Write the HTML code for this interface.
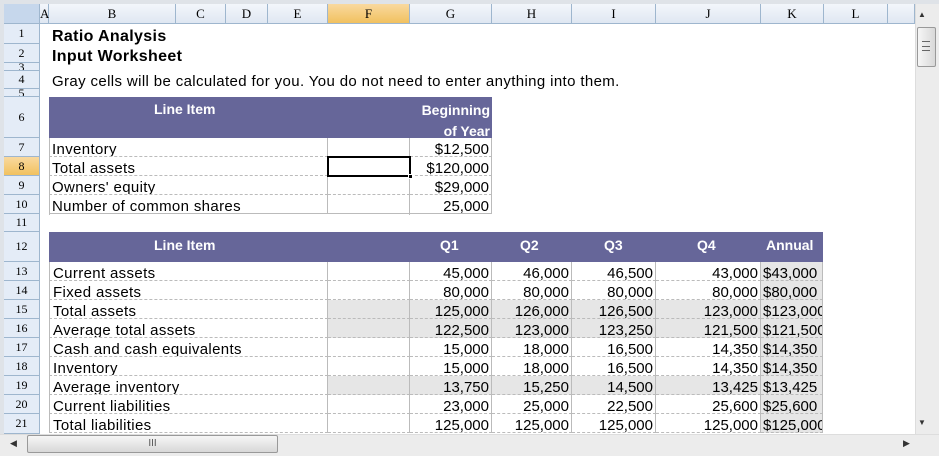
<!DOCTYPE html><html><head><style>
*{margin:0;padding:0;box-sizing:border-box}
body{width:939px;height:456px;overflow:hidden;background:#fff;position:relative;font-family:"Liberation Sans",sans-serif}
.a{position:absolute}
.ch{position:absolute;top:4px;height:20px;background:linear-gradient(#f3f6fb,#dfe7f2);border-right:1px solid #9eb6ce;border-bottom:1px solid #9eb6ce;font:13px "Liberation Serif",serif;text-align:center;line-height:19px;color:#000}
.rh{position:absolute;left:4px;width:36px;background:#e4ecf7;border-bottom:1px solid #9eb6ce;border-right:1px solid #9eb6ce;font:12px "Liberation Serif",serif;text-align:center;color:#000;overflow:hidden}
.sel{background:linear-gradient(#f9d99f,#f1c15f)!important}
.t{position:absolute;font-size:15px;color:#000;white-space:nowrap;line-height:19px}
.hdr{position:absolute;background:#666699;color:#fff;font-weight:bold;font-size:14px}
.c{position:absolute;height:19px;border-bottom:1px dashed #bbb;border-right:1px solid #bbb;font-size:15px;line-height:23px;text-align:right;padding-right:2px;overflow:hidden;white-space:nowrap}
.l{letter-spacing:0.35px}
.g{background:#e6e6e6}
</style></head><body>
<div class="a" style="left:0;top:0;width:939px;height:4px;background:#dfe3e8"></div>
<div class="a" style="left:0;top:0;width:4px;height:456px;background:#dfe3e8"></div>
<div class="ch" style="left:4px;width:36px;background:#c6d7ec"></div>
<div class="ch" style="left:40px;width:9px">A</div>
<div class="ch" style="left:49px;width:127px">B</div>
<div class="ch" style="left:176px;width:50px">C</div>
<div class="ch" style="left:226px;width:42px">D</div>
<div class="ch" style="left:268px;width:60px">E</div>
<div class="ch sel" style="left:328px;width:82px">F</div>
<div class="ch" style="left:410px;width:82px">G</div>
<div class="ch" style="left:492px;width:80px">H</div>
<div class="ch" style="left:572px;width:84px">I</div>
<div class="ch" style="left:656px;width:105px">J</div>
<div class="ch" style="left:761px;width:63px">K</div>
<div class="ch" style="left:824px;width:64px">L</div>
<div class="ch" style="left:888px;width:27px"></div>

<div class="rh" style="top:24px;height:20px;line-height:19px">1</div>
<div class="rh" style="top:44px;height:19px;line-height:18px">2</div>
<div class="rh" style="top:63px;height:8px;line-height:8px">3</div>
<div class="rh" style="top:71px;height:18px;line-height:17px">4</div>
<div class="rh" style="top:89px;height:8px;line-height:8px">5</div>
<div class="rh" style="top:97px;height:41px;line-height:40px">6</div>
<div class="rh" style="top:138px;height:19px;line-height:18px">7</div>
<div class="rh sel" style="top:157px;height:19px;line-height:18px">8</div>
<div class="rh" style="top:176px;height:19px;line-height:18px">9</div>
<div class="rh" style="top:195px;height:19px;line-height:18px">10</div>
<div class="rh" style="top:214px;height:18px;line-height:17px">11</div>
<div class="rh" style="top:232px;height:30px;line-height:29px">12</div>
<div class="rh" style="top:262px;height:19px;line-height:18px">13</div>
<div class="rh" style="top:281px;height:19px;line-height:18px">14</div>
<div class="rh" style="top:300px;height:19px;line-height:18px">15</div>
<div class="rh" style="top:319px;height:19px;line-height:18px">16</div>
<div class="rh" style="top:338px;height:19px;line-height:18px">17</div>
<div class="rh" style="top:357px;height:19px;line-height:18px">18</div>
<div class="rh" style="top:376px;height:19px;line-height:18px">19</div>
<div class="rh" style="top:395px;height:19px;line-height:18px">20</div>
<div class="rh" style="top:414px;height:20px;line-height:18px">21</div>

<div class="t l" style="left:52px;top:27px;font-weight:bold;font-size:16px">Ratio Analysis</div>
<div class="t l" style="left:52px;top:47px;font-weight:bold;font-size:16px">Input Worksheet</div>
<div class="a" style="left:52px;top:71px;height:18px;overflow:hidden;font-size:15px;line-height:22px;letter-spacing:0.37px;white-space:nowrap">Gray cells will be calculated for you. You do not need to enter anything into them.</div>

<div class="hdr" style="left:49px;top:97px;width:443px;height:41px"></div>
<div class="t" style="left:154px;top:100px;color:#fff;font-weight:bold;font-size:14px">Line Item</div>
<div class="t" style="left:410px;top:100px;width:80px;text-align:right;color:#fff;font-weight:bold;font-size:14px;line-height:21px;white-space:normal">Beginning<br>of Year</div>

<div class="c l" style="left:49px;top:138px;width:279px;text-align:left;padding-left:3px">Inventory</div>
<div class="c l" style="left:49px;top:157px;width:279px;text-align:left;padding-left:3px">Total assets</div>
<div class="c l" style="left:49px;top:176px;width:279px;text-align:left;padding-left:3px">Owners' equity</div>
<div class="c l" style="left:49px;top:195px;width:279px;text-align:left;padding-left:3px;border-bottom:1px solid #bbb">Number of common shares</div>
<div class="c" style="left:328px;top:138px;width:82px"></div>
<div class="c" style="left:328px;top:157px;width:82px"></div>
<div class="c" style="left:328px;top:176px;width:82px"></div>
<div class="c" style="left:328px;top:195px;width:82px;border-bottom:1px solid #bbb"></div>
<div class="c" style="left:410px;top:138px;width:82px">$12,500</div>
<div class="c" style="left:410px;top:157px;width:82px">$120,000</div>
<div class="c" style="left:410px;top:176px;width:82px">$29,000</div>
<div class="c" style="left:410px;top:195px;width:82px;border-bottom:1px solid #bbb">25,000</div>
<div class="a" style="left:49px;top:138px;width:1px;height:77px;background:#bbb"></div>
<div class="a" style="left:409px;top:138px;width:1px;height:77px;background:#bbb"></div>
<div class="a" style="left:327px;top:156px;width:84px;height:21px;border:2px solid #000"></div>
<div class="a" style="left:408px;top:174px;width:5px;height:5px;background:#000;border:1px solid #fff"></div>

<div class="hdr" style="left:49px;top:232px;width:774px;height:30px"></div>
<div class="t" style="left:154px;top:236px;color:#fff;font-weight:bold;font-size:14px">Line Item</div>
<div class="t" style="left:440px;top:236px;color:#fff;font-weight:bold;font-size:14px">Q1</div>
<div class="t" style="left:520px;top:236px;color:#fff;font-weight:bold;font-size:14px">Q2</div>
<div class="t" style="left:604px;top:236px;color:#fff;font-weight:bold;font-size:14px">Q3</div>
<div class="t" style="left:697px;top:236px;color:#fff;font-weight:bold;font-size:14px">Q4</div>
<div class="t" style="left:766px;top:236px;color:#fff;font-weight:bold;font-size:14px">Annual</div>

<div id="rows"></div>
<script>
var d=[["Current assets","45,000","46,000","46,500","43,000","$43,000",0],
["Fixed assets","80,000","80,000","80,000","80,000","$80,000",0],
["Total assets","125,000","126,000","126,500","123,000","$123,000",1],
["Average total assets","122,500","123,000","123,250","121,500","$121,500",1],
["Cash and cash equivalents","15,000","18,000","16,500","14,350","$14,350",0],
["Inventory","15,000","18,000","16,500","14,350","$14,350",0],
["Average inventory","13,750","15,250","14,500","13,425","$13,425",1],
["Current liabilities","23,000","25,000","22,500","25,600","$25,600",0],
["Total liabilities","125,000","125,000","125,000","125,000","$125,000",0]];
var cols=[[410,82],[492,80],[572,84],[656,105]],h="";
d.forEach(function(r,i){var y=262+i*19,g=r[6]?" g":"";
h+='<div class="c l" style="left:49px;top:'+y+'px;width:279px;text-align:left;padding-left:3px;border-left:1px solid #bbb">'+r[0]+'</div>';
h+='<div class="c'+g+'" style="left:328px;top:'+y+'px;width:82px"></div>';
cols.forEach(function(c,j){h+='<div class="c'+g+'" style="left:'+c[0]+'px;top:'+y+'px;width:'+c[1]+'px">'+r[j+1]+'</div>'});
h+='<div class="c g" style="left:761px;top:'+y+'px;width:62px;text-align:left;padding-left:2px">'+r[5]+'</div>';});
document.getElementById("rows").innerHTML=h;
</script>

<div class="a" style="left:915px;top:4px;width:24px;height:430px;background:#ececec;border-left:1px solid #ddd"></div>
<div class="a" style="left:918px;top:10px;font-size:8px;color:#333">&#9650;</div>
<div class="a" style="left:917px;top:27px;width:19px;height:40px;background:linear-gradient(90deg,#f6f6f6,#d8d8d8);border:1px solid #999;border-radius:2px"></div>
<div class="a" style="left:922px;top:41px;width:8px;height:10px;border-top:1px solid #666;border-bottom:1px solid #666"></div>
<div class="a" style="left:922px;top:46px;width:8px;height:1px;background:#666"></div>
<div class="a" style="left:918px;top:418px;font-size:8px;color:#333">&#9660;</div>
<div class="a" style="left:0;top:434px;width:939px;height:22px;background:#ececec;border-top:1px solid #ddd"></div>
<div class="a" style="left:10px;top:438px;font-size:9px;color:#333">&#9664;</div>
<div class="a" style="left:27px;top:435px;width:251px;height:18px;background:linear-gradient(#f6f6f6,#d8d8d8);border:1px solid #999;border-radius:2px;text-align:center;font-size:10px;line-height:16px;color:#555">III</div>
<div class="a" style="left:903px;top:438px;font-size:9px;color:#333">&#9654;</div>
</body></html>
